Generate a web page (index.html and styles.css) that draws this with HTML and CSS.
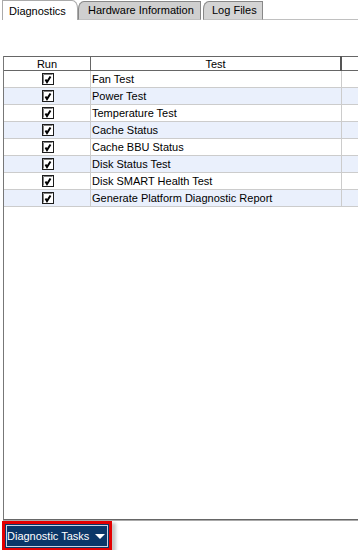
FILE: index.html
```html
<!DOCTYPE html>
<html>
<head>
<meta charset="utf-8">
<link rel="stylesheet" href="styles.css">
</head>
<body>
<div class="tabs">
  <div class="tab tab-active">Diagnostics</div>
  <div class="tab tab-hw">Hardware Information</div>
  <div class="tab tab-log">Log Files</div>
  <div class="tab-fill"></div>
</div>
<div class="panel">
  <table class="grid">
    <thead>
      <tr><th class="c-run">Run</th><th class="c-test">Test</th><th class="c-x"></th></tr>
    </thead>
    <tbody>
      <tr><td class="c-run"><span class="cb"><svg width="12" height="12" viewBox="0 0 12 12"><rect x="0.5" y="0.5" width="11" height="11" fill="#fff" stroke="#1c1c1c"/><path d="M1.5 10.5V1.5h9" fill="none" stroke="#808080"/><path d="M3.5 6.5l1.5 2.5 3.5-5.5" fill="none" stroke="#000" stroke-width="2"/></svg></span></td><td>Fan Test</td><td></td></tr>
      <tr class="alt"><td class="c-run"><span class="cb"><svg width="12" height="12" viewBox="0 0 12 12"><rect x="0.5" y="0.5" width="11" height="11" fill="#fff" stroke="#1c1c1c"/><path d="M1.5 10.5V1.5h9" fill="none" stroke="#808080"/><path d="M3.5 6.5l1.5 2.5 3.5-5.5" fill="none" stroke="#000" stroke-width="2"/></svg></span></td><td>Power Test</td><td></td></tr>
      <tr><td class="c-run"><span class="cb"><svg width="12" height="12" viewBox="0 0 12 12"><rect x="0.5" y="0.5" width="11" height="11" fill="#fff" stroke="#1c1c1c"/><path d="M1.5 10.5V1.5h9" fill="none" stroke="#808080"/><path d="M3.5 6.5l1.5 2.5 3.5-5.5" fill="none" stroke="#000" stroke-width="2"/></svg></span></td><td>Temperature Test</td><td></td></tr>
      <tr class="alt"><td class="c-run"><span class="cb"><svg width="12" height="12" viewBox="0 0 12 12"><rect x="0.5" y="0.5" width="11" height="11" fill="#fff" stroke="#1c1c1c"/><path d="M1.5 10.5V1.5h9" fill="none" stroke="#808080"/><path d="M3.5 6.5l1.5 2.5 3.5-5.5" fill="none" stroke="#000" stroke-width="2"/></svg></span></td><td>Cache Status</td><td></td></tr>
      <tr><td class="c-run"><span class="cb"><svg width="12" height="12" viewBox="0 0 12 12"><rect x="0.5" y="0.5" width="11" height="11" fill="#fff" stroke="#1c1c1c"/><path d="M1.5 10.5V1.5h9" fill="none" stroke="#808080"/><path d="M3.5 6.5l1.5 2.5 3.5-5.5" fill="none" stroke="#000" stroke-width="2"/></svg></span></td><td>Cache BBU Status</td><td></td></tr>
      <tr class="alt"><td class="c-run"><span class="cb"><svg width="12" height="12" viewBox="0 0 12 12"><rect x="0.5" y="0.5" width="11" height="11" fill="#fff" stroke="#1c1c1c"/><path d="M1.5 10.5V1.5h9" fill="none" stroke="#808080"/><path d="M3.5 6.5l1.5 2.5 3.5-5.5" fill="none" stroke="#000" stroke-width="2"/></svg></span></td><td>Disk Status Test</td><td></td></tr>
      <tr><td class="c-run"><span class="cb"><svg width="12" height="12" viewBox="0 0 12 12"><rect x="0.5" y="0.5" width="11" height="11" fill="#fff" stroke="#1c1c1c"/><path d="M1.5 10.5V1.5h9" fill="none" stroke="#808080"/><path d="M3.5 6.5l1.5 2.5 3.5-5.5" fill="none" stroke="#000" stroke-width="2"/></svg></span></td><td>Disk SMART Health Test</td><td></td></tr>
      <tr class="alt"><td class="c-run"><span class="cb"><svg width="12" height="12" viewBox="0 0 12 12"><rect x="0.5" y="0.5" width="11" height="11" fill="#fff" stroke="#1c1c1c"/><path d="M1.5 10.5V1.5h9" fill="none" stroke="#808080"/><path d="M3.5 6.5l1.5 2.5 3.5-5.5" fill="none" stroke="#000" stroke-width="2"/></svg></span></td><td>Generate Platform Diagnostic Report</td><td></td></tr>
    </tbody>
  </table>
</div>
<div class="footer">
  <div class="tasks-wrap">
    <div class="tasks">Diagnostic Tasks <span class="arrow"></span></div>
  </div>
</div>
</body>
</html>
```

FILE: styles.css
```css
html, body {
  margin: 0;
  padding: 0;
  background: #fff;
  width: 358px;
  height: 550px;
  overflow: hidden;
  font-family: "Liberation Sans", Arial, sans-serif;
  font-size: 11px;
  color: #000;
}

.tabs {
  display: flex;
  align-items: flex-end;
  height: 20px;
  padding-left: 2px;
}

.tab {
  box-sizing: border-box;
  height: 19px;
  line-height: 17px;
  padding: 0 6px;
  border: 1px solid #999;
  border-bottom: none;
  white-space: nowrap;
  font-size: 11px;
}

.tab-active {
  width: 76px;
  height: 20px;
  background: #fff;
  border-color: #aaa;
  border-top-right-radius: 6px 8px;
  padding-top: 2px;
}

.tab-hw {
  width: 123px;
  background: #cfcfcf;
  border-color: #888;
  border-top-left-radius: 6px 8px;
  border-bottom: 1px solid #c0c0c0;
  padding-left: 9px;
}

.tab-log {
  width: 60px;
  margin-left: 2px;
  background: #d4d4d4;
  border-color: #888;
  border-top-left-radius: 6px 8px;
  border-bottom: 1px solid #c0c0c0;
  padding-left: 8px;
}

.tab-fill {
  flex: 1;
  height: 1px;
  background: #c0c0c0;
}

.panel {
  margin: 36px 0 0 3px;
  height: 463px;
  border-left: 1px solid #777;
  border-bottom: 1px solid #666;
  box-shadow: 0 1px 0 #aaa;
  overflow: hidden;
}

.grid {
  border-collapse: collapse;
  table-layout: fixed;
  width: 400px;
}

.grid th {
  height: 13px;
  padding: 0;
  font-weight: normal;
  font-size: 11px;
  line-height: 12px;
  text-align: center;
  border-top: 1px solid #666;
  border-bottom: 1px solid #666;
  border-right: 1px solid #666;
  background: #fff;
}

.grid th.c-test {
  border-right: 2px solid #555;
}

.grid th.c-run { width: 86px; }
.grid th.c-test { width: 249px; }

.grid td {
  height: 16px;
  padding: 0 0 0 1px;
  line-height: 16px;
  border-bottom: 1px solid #ccc;
  border-right: 1px solid #ccc;
  white-space: nowrap;
  overflow: hidden;
}

.grid td.c-run {
  text-align: center;
  padding: 0;
}

.grid tr.alt td {
  background: #eaf0fc;
}

.cb {
  display: inline-block;
  width: 12px;
  height: 12px;
  vertical-align: -2px;
  margin-left: 1px;
}

.cb svg { display: block; }

.footer {
  padding: 0 0 0 2px;
  margin-top: 1px;
}

.tasks-wrap {
  display: inline-block;
  border: 3px solid #e30000;
  box-shadow: 4px 2px 3px #c8c8c8;
}

.tasks {
  background: #0b3768;
  color: #fff;
  height: 22px;
  line-height: 22px;
  padding: 0 3px 0 1px;
  font-size: 11px;
  border: 1px solid #0b3768;
  outline: 1px solid #c9d4e3;
  outline-offset: -2px;
  display: flex;
  align-items: center;
  gap: 6px;
}

.arrow {
  width: 0;
  height: 0;
  border-left: 5px solid transparent;
  border-right: 5px solid transparent;
  border-top: 5px solid #fff;
}
```
